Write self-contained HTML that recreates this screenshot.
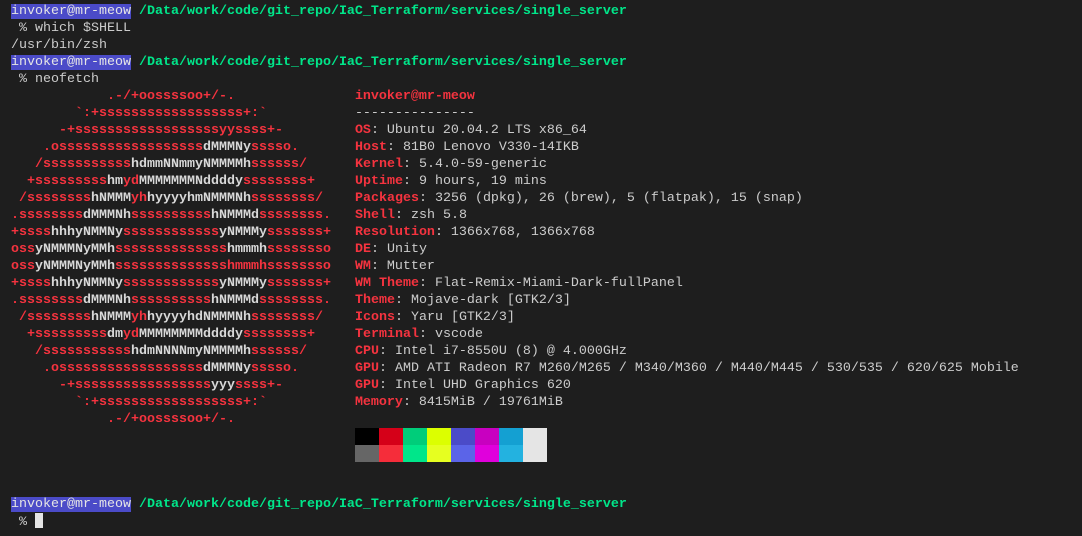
<!DOCTYPE html>
<html><head><meta charset="utf-8"><style>
html,body{margin:0;padding:0;background:#1e1e1e;width:1082px;height:536px;overflow:hidden}
pre{margin:0;position:absolute;left:11px;top:3px;font-family:"Liberation Mono",monospace;font-size:13.33px;line-height:17px;color:#cccccc;white-space:pre}
.u{background:#4b4bc8;color:#e5e5e5}
.p{color:#00e68a;font-weight:bold}
.r{color:#f5333f;font-weight:bold}
.w{color:#d8d8d8;font-weight:bold}
.c{display:inline-block;width:8px;height:15px;background:#e5e5e5;vertical-align:-3px}
.blk{position:absolute;left:355px;width:24px;height:17px}
</style></head><body>
<pre><span class="u">invoker@mr-meow</span> <span class="p">/Data/work/code/git_repo/IaC_Terraform/services/single_server</span>
 % which $SHELL
/usr/bin/zsh
<span class="u">invoker@mr-meow</span> <span class="p">/Data/work/code/git_repo/IaC_Terraform/services/single_server</span>
 % neofetch
<span class="r">            .-/+oossssoo+/-.               </span><span class="r">invoker@mr-meow</span>
<span class="r">        `:+ssssssssssssssssss+:`           </span>---------------
<span class="r">      -+ssssssssssssssssssyyssss+-         </span><span class="r">OS</span>: Ubuntu 20.04.2 LTS x86_64
<span class="r">    .ossssssssssssssssss</span><span class="w">dMMMNy</span><span class="r">sssso.       </span><span class="r">Host</span>: 81B0 Lenovo V330-14IKB
<span class="r">   /sssssssssss</span><span class="w">hdmmNNmmyNMMMMh</span><span class="r">ssssss/      </span><span class="r">Kernel</span>: 5.4.0-59-generic
<span class="r">  +sssssssss</span><span class="w">hm</span><span class="r">yd</span><span class="w">MMMMMMMNddddy</span><span class="r">ssssssss+     </span><span class="r">Uptime</span>: 9 hours, 19 mins
<span class="r"> /ssssssss</span><span class="w">hNMMM</span><span class="r">yh</span><span class="w">hyyyyhmNMMMNh</span><span class="r">ssssssss/    </span><span class="r">Packages</span>: 3256 (dpkg), 26 (brew), 5 (flatpak), 15 (snap)
<span class="r">.ssssssss</span><span class="w">dMMMNh</span><span class="r">ssssssssss</span><span class="w">hNMMMd</span><span class="r">ssssssss.   </span><span class="r">Shell</span>: zsh 5.8
<span class="r">+ssss</span><span class="w">hhhyNMMNy</span><span class="r">ssssssssssss</span><span class="w">yNMMMy</span><span class="r">sssssss+   </span><span class="r">Resolution</span>: 1366x768, 1366x768
<span class="r">oss</span><span class="w">yNMMMNyMMh</span><span class="r">ssssssssssssss</span><span class="w">hmmmh</span><span class="r">ssssssso   </span><span class="r">DE</span>: Unity
<span class="r">oss</span><span class="w">yNMMMNyMMh</span><span class="r">sssssssssssssshmmmhssssssso   </span><span class="r">WM</span>: Mutter
<span class="r">+ssss</span><span class="w">hhhyNMMNy</span><span class="r">ssssssssssss</span><span class="w">yNMMMy</span><span class="r">sssssss+   </span><span class="r">WM Theme</span>: Flat-Remix-Miami-Dark-fullPanel
<span class="r">.ssssssss</span><span class="w">dMMMNh</span><span class="r">ssssssssss</span><span class="w">hNMMMd</span><span class="r">ssssssss.   </span><span class="r">Theme</span>: Mojave-dark [GTK2/3]
<span class="r"> /ssssssss</span><span class="w">hNMMM</span><span class="r">yh</span><span class="w">hyyyyhdNMMMNh</span><span class="r">ssssssss/    </span><span class="r">Icons</span>: Yaru [GTK2/3]
<span class="r">  +sssssssss</span><span class="w">dm</span><span class="r">yd</span><span class="w">MMMMMMMMddddy</span><span class="r">ssssssss+     </span><span class="r">Terminal</span>: vscode
<span class="r">   /sssssssssss</span><span class="w">hdmNNNNmyNMMMMh</span><span class="r">ssssss/      </span><span class="r">CPU</span>: Intel i7-8550U (8) @ 4.000GHz
<span class="r">    .ossssssssssssssssss</span><span class="w">dMMMNy</span><span class="r">sssso.       </span><span class="r">GPU</span>: AMD ATI Radeon R7 M260/M265 / M340/M360 / M440/M445 / 530/535 / 620/625 Mobile
<span class="r">      -+sssssssssssssssss</span><span class="w">yyy</span><span class="r">ssss+-         </span><span class="r">GPU</span>: Intel UHD Graphics 620
<span class="r">        `:+ssssssssssssssssss+:`           </span><span class="r">Memory</span>: 8415MiB / 19761MiB
<span class="r">            .-/+oossssoo+/-.</span>




<span class="u">invoker@mr-meow</span> <span class="p">/Data/work/code/git_repo/IaC_Terraform/services/single_server</span>
 % <span class="c"></span></pre>
<div class="blk" style="top:428px;left:355px;background:#000000"></div>
<div class="blk" style="top:428px;left:379px;background:#d50018"></div>
<div class="blk" style="top:428px;left:403px;background:#00cd7a"></div>
<div class="blk" style="top:428px;left:427px;background:#dcff00"></div>
<div class="blk" style="top:428px;left:451px;background:#4b4bc8"></div>
<div class="blk" style="top:428px;left:475px;background:#c800c0"></div>
<div class="blk" style="top:428px;left:499px;background:#14a0d2"></div>
<div class="blk" style="top:428px;left:523px;background:#e5e5e5"></div>
<div class="blk" style="top:445px;left:355px;background:#666666"></div>
<div class="blk" style="top:445px;left:379px;background:#f52d3a"></div>
<div class="blk" style="top:445px;left:403px;background:#00e68a"></div>
<div class="blk" style="top:445px;left:427px;background:#e6ff20"></div>
<div class="blk" style="top:445px;left:451px;background:#5b64e8"></div>
<div class="blk" style="top:445px;left:475px;background:#e000dc"></div>
<div class="blk" style="top:445px;left:499px;background:#23b2e0"></div>
<div class="blk" style="top:445px;left:523px;background:#e5e5e5"></div>
</body></html>
